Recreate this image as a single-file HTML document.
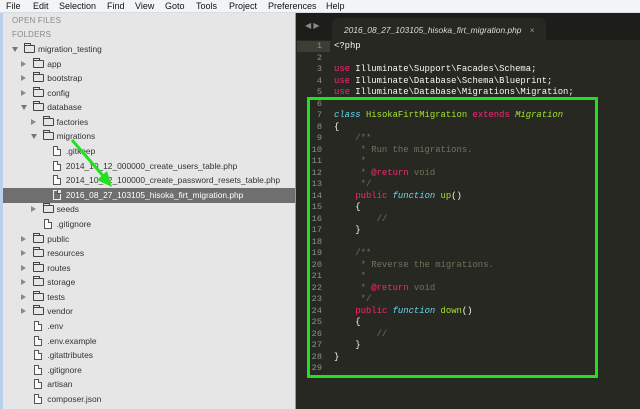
<!DOCTYPE html>
<html><head><style>
*{margin:0;padding:0;box-sizing:border-box}
body{width:640px;height:409px;overflow:hidden;position:relative;background:#e6e6e6;font-family:"Liberation Sans","DejaVu Sans",sans-serif}
#menu{position:absolute;left:0;top:0;width:640px;height:13px;background:#f3f4f6;font-size:9px;color:#111;border-bottom:1px solid #d8dce4}
#menu span{position:absolute;top:1px}
#side{position:absolute;left:0;top:13px;width:296px;height:396px;background:#e6e6e6;border-left:3px solid #b9d1ea;border-right:1px solid #999}
.hd{position:absolute;left:9px;font-size:8px;color:#8a8a8a;letter-spacing:.2px}
.r{position:absolute;height:14px;font-size:8.4px;color:#333;line-height:14px;white-space:nowrap}
.sel{position:absolute;left:0;width:292px;top:175px;height:15px;background:#6f6f6f}
.ar{position:absolute;top:4px;width:0;height:0}
.ar.c{border-left:5px solid #8a8a8a;border-top:3.5px solid transparent;border-bottom:3.5px solid transparent}
.ar.o{border-top:5px solid #777;border-left:3.5px solid transparent;border-right:3.5px solid transparent;top:5px}
.fd{position:absolute;top:3px;width:11px;height:8px;border:1px solid #444;border-radius:1px}
.fd:before{content:"";position:absolute;left:-1px;top:-3px;width:5px;height:2px;border:1px solid #444;border-bottom:none}
.fl{position:absolute;top:2px;width:8px;height:10px;border:1px solid #555;background:#fafafa}
.fl:after{content:"";position:absolute;right:-1px;top:-1px;width:3px;height:3px;background:#e6e6e6;border-left:1px solid #555;border-bottom:1px solid #555}
#ed{position:absolute;left:296px;top:13px;width:344px;height:396px;background:#272822}
#tabbar{position:absolute;left:0;top:0;width:344px;height:27px;background:#1d1e1a}
#tab{position:absolute;left:36px;top:5px;width:214px;height:22px;background:#272822;border-radius:6px 6px 0 0;font-style:italic;font-size:8.4px;color:#ddd;padding:7px 0 0 12px}
#gl{position:absolute;left:1px;top:28px;width:33px;height:11px;background:#3c3d35}
.ln{position:absolute;left:0;width:26px;text-align:right;font-family:"Liberation Mono",monospace;font-size:8.6px;color:#8f908a;line-height:11.5px}
.cd{position:absolute;left:38px;font-family:"Liberation Mono",monospace;font-size:8.9px;color:#f8f8f2;line-height:11.5px;white-space:pre}
.k{color:#f92672}.s{color:#66d9ef;font-style:italic}.g{color:#a6e22e}.gi{color:#a6e22e;font-style:italic}.c{color:#75715e}
#box{position:absolute;left:307px;top:97px;width:291px;height:281px;border:3px solid #22e01e}
</style></head><body>
<div id="menu"><span style="left:6px">File</span><span style="left:33px">Edit</span><span style="left:59px">Selection</span><span style="left:107px">Find</span><span style="left:135px">View</span><span style="left:165px">Goto</span><span style="left:196px">Tools</span><span style="left:229px">Project</span><span style="left:268px">Preferences</span><span style="left:326px">Help</span></div>
<div id="side">
<div class="hd" style="top:3px">OPEN FILES</div>
<div class="hd" style="top:17px">FOLDERS</div>
<div class="sel"></div>
</div>
<div id="rows"></div>
<div id="ed">
<div id="tabbar"><span style="position:absolute;left:9px;top:8px;color:#888;font-size:8px">◀ ▶</span><div id="tab">2016_08_27_103105_hisoka_firt_migration.php <span style="color:#999;font-style:normal;margin-left:6px">×</span></div></div>
<div id="gl"></div>
</div>
<script>
var R=[[0,'o','d','migration_testing'],[1,'c','d','app'],[1,'c','d','bootstrap'],[1,'c','d','config'],[1,'o','d','database'],[2,'c','d','factories'],[2,'o','d','migrations'],[3,'','f','.gitkeep'],[3,'','f','2014_10_12_000000_create_users_table.php'],[3,'','f','2014_10_12_100000_create_password_resets_table.php'],[3,'','f','2016_08_27_103105_hisoka_firt_migration.php'],[2,'c','d','seeds'],[2,'','f','.gitignore'],[1,'c','d','public'],[1,'c','d','resources'],[1,'c','d','routes'],[1,'c','d','storage'],[1,'c','d','tests'],[1,'c','d','vendor'],[1,'','f','.env'],[1,'','f','.env.example'],[1,'','f','.gitattributes'],[1,'','f','.gitignore'],[1,'','f','artisan'],[1,'','f','composer.json']];
var h='';R.forEach(function(r,i){var y=42+i*14.58,x=12+r[0]*9.3;var sel=i==10;
h+='<div class="r" style="top:'+y+'px;left:'+x+'px;'+(sel?'color:#fff':'')+'">';
if(r[1])h+='<span class="ar '+r[1]+'" style="left:0"></span>';
if(r[2]=='d')h+='<span class="fd" style="left:12px"></span><span style="position:absolute;left:26px">'+r[3]+'</span>';
else h+='<span class="fl" style="left:13px;'+(sel?'border-color:#eee;background:#6f6f6f':'')+'"></span><span style="position:absolute;left:26px">'+r[3]+'</span>';
h+='</div>';});document.getElementById('rows').innerHTML=h;
var L=['&lt;?php','','<span class="k">use</span> Illuminate\\Support\\Facades\\Schema;','<span class="k">use</span> Illuminate\\Database\\Schema\\Blueprint;','<span class="k">use</span> Illuminate\\Database\\Migrations\\Migration;','',
'<span class="s">class</span> <span class="g">HisokaFirtMigration</span> <span class="k">extends</span> <span class="gi">Migration</span>','{','<span class="c">    /**</span>','<span class="c">     * Run the migrations.</span>','<span class="c">     *</span>','<span class="c">     * </span><span class="k">@return</span><span class="c"> void</span>','<span class="c">     */</span>',
'    <span class="k">public</span> <span class="s">function</span> <span class="g">up</span>()','    {','<span class="c">        //</span>','    }','','<span class="c">    /**</span>','<span class="c">     * Reverse the migrations.</span>','<span class="c">     *</span>','<span class="c">     * </span><span class="k">@return</span><span class="c"> void</span>','<span class="c">     */</span>',
'    <span class="k">public</span> <span class="s">function</span> <span class="g">down</span>()','    {','<span class="c">        //</span>','    }','}',''];
var e='';L.forEach(function(l,i){var y=28+i*11.5;e+='<div class="ln" style="top:'+y+'px">'+(i+1)+'</div><div class="cd" style="top:'+y+'px">'+l+'</div>';});
document.getElementById('ed').insertAdjacentHTML('beforeend',e);
</script>
<div id="box"></div>
<svg style="position:absolute;left:0;top:0" width="640" height="409"><line x1="72" y1="140" x2="105" y2="178" stroke="#22e01e" stroke-width="3"/><polygon points="112,187 97,180 107,171" fill="#22e01e"/></svg>
</body></html>
